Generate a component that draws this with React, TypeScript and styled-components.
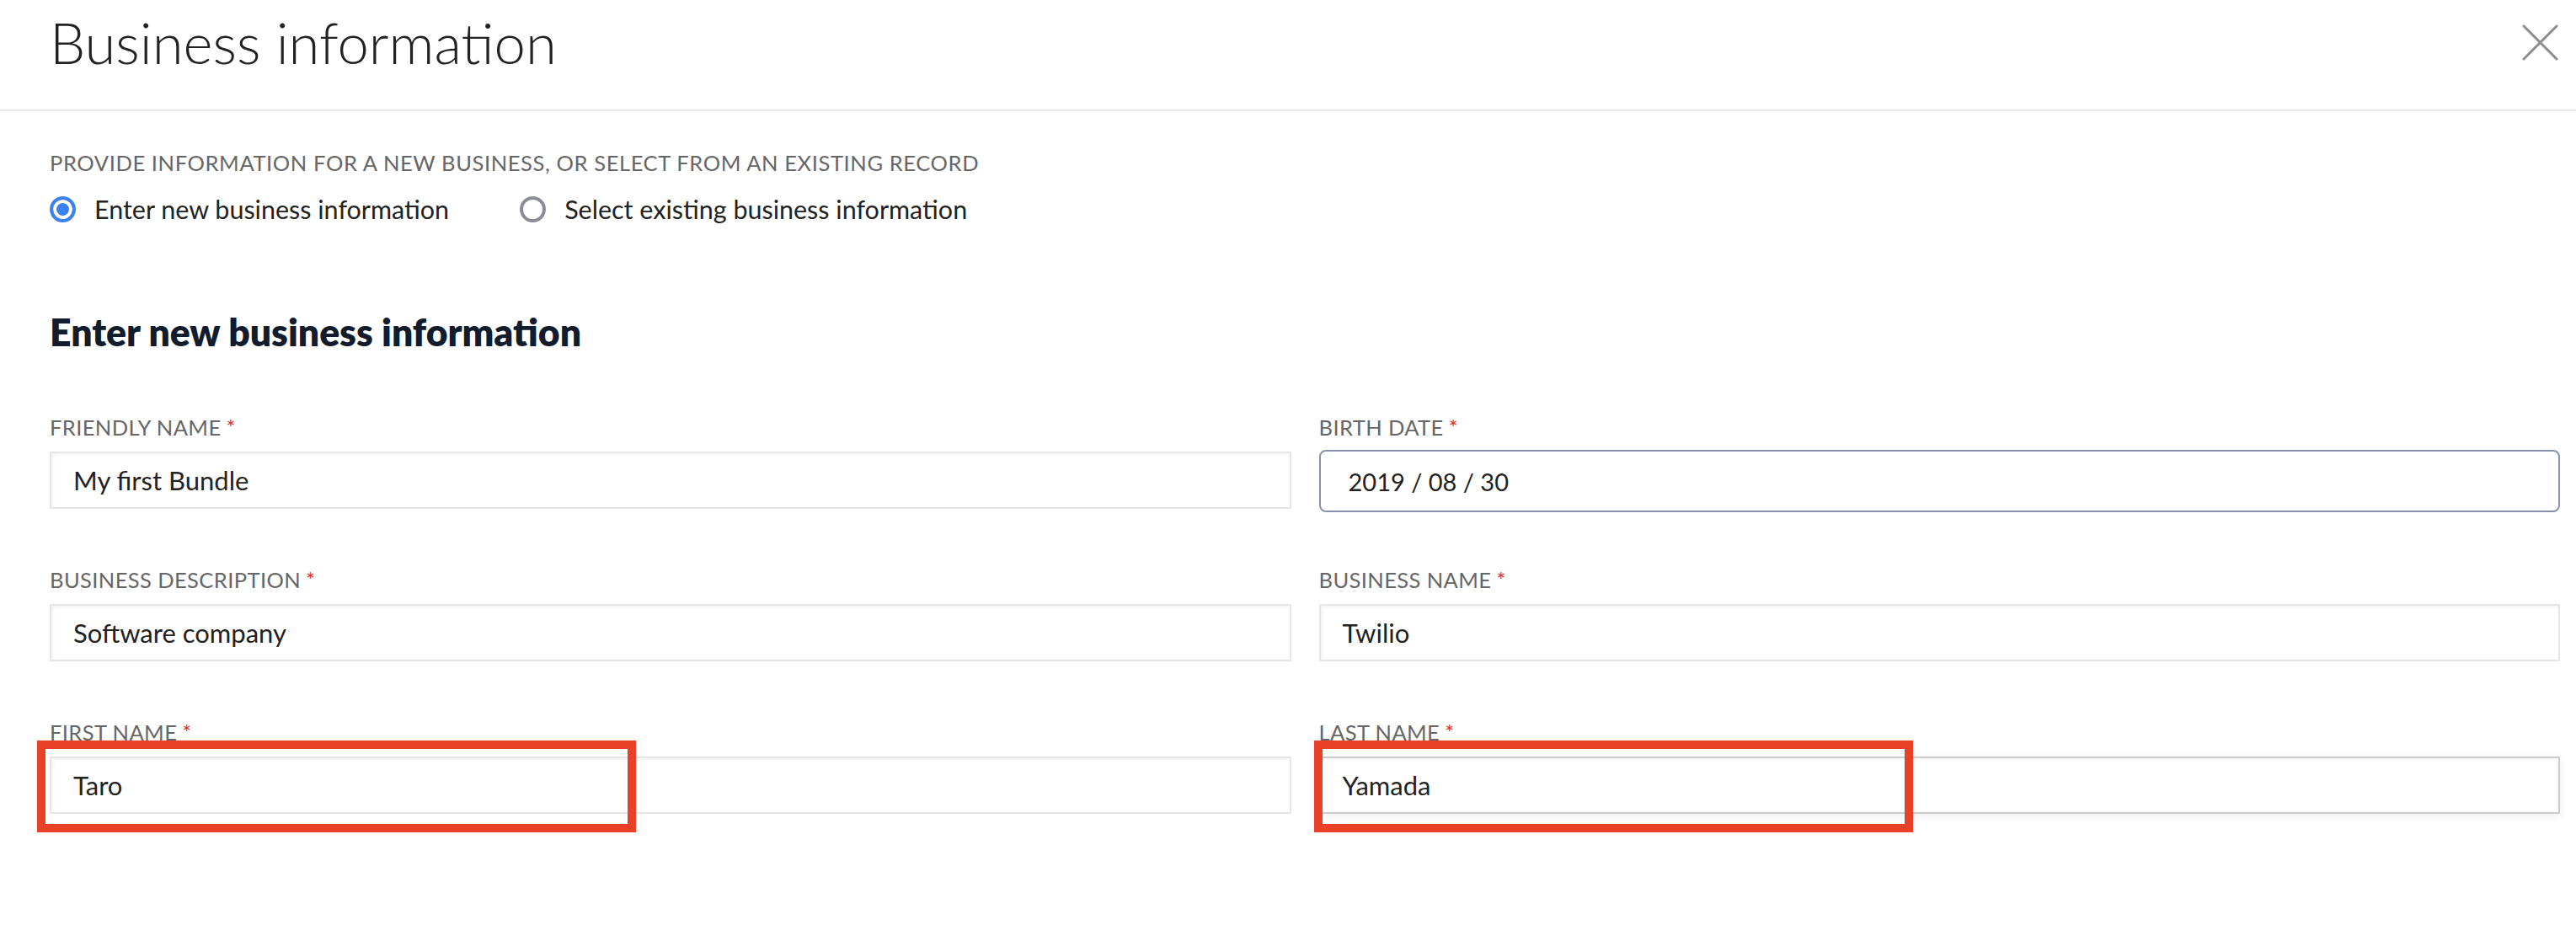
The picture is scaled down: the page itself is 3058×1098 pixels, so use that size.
import React from "react";
import styled, { createGlobalStyle } from "styled-components";

const Global = createGlobalStyle`
  html, body { margin: 0; padding: 0; background: #ffffff; }
  body { font-family: Lato, "Open Sans", sans-serif; color: #222222; }
  * { box-sizing: border-box; }
`;

const Page = styled.div`
  width: 3058px;
  height: 1098px;
  background: #ffffff;
  overflow: hidden;
`;

const Header = styled.header`
  height: 132px;
  display: flex;
  align-items: flex-start;
  justify-content: space-between;
  padding: 13px 21px 0 59px;
  border-bottom: 2px solid #e8e8e8;
`;

const Title = styled.h1`
  margin: 0;
  font-family: Lato, sans-serif;
  font-weight: 300;
  font-size: 67px;
  line-height: 74px;
  color: #222222;
`;

const CloseButton = styled.button`
  margin-top: 16px;
  width: 43px;
  height: 43px;
  padding: 0;
  border: none;
  background: transparent;
  display: flex;
  align-items: center;
  justify-content: center;
`;

const Body = styled.main`
  padding: 46px 19px 0 59px;
`;

const Overline = styled.div`
  font-size: 25.5px;
  line-height: 30px;
  letter-spacing: 0.6px;
  color: #666666;
  text-transform: uppercase;
`;

const RadioRow = styled.div`
  margin-top: 20px;
  display: flex;
  align-items: center;
  gap: 84px;
  height: 40px;
`;

const RadioOption = styled.label`
  display: flex;
  align-items: center;
  gap: 22px;
  font-size: 30.5px;
  line-height: 40px;
  color: #222222;
`;

const RadioDot = styled.span<{ $checked?: boolean }>`
  width: 31px;
  height: 31px;
  border-radius: 50%;
  border: 4px solid ${(p) => (p.$checked ? "#3b82f0" : "#8d8d99")};
  background: ${(p) => (p.$checked ? "#3b82f0" : "#ffffff")};
  box-shadow: ${(p) => (p.$checked ? "inset 0 0 0 4px #ffffff" : "none")};
  flex: none;
`;

const SectionTitle = styled.h2`
  margin: 101px 0 0;
  font-size: 44.5px;
  line-height: 50px;
  font-weight: 800;
  color: #121c2d;
`;

const FieldGrid = styled.div`
  margin-top: 73px;
  display: grid;
  grid-template-columns: 1fr 1fr;
  column-gap: 33px;
  row-gap: 69px;
`;

const Field = styled.div`
  position: relative;
  display: flex;
  flex-direction: column;
`;

const Label = styled.div`
  font-size: 25.5px;
  line-height: 30px;
  letter-spacing: 0.4px;
  color: #666666;
  text-transform: uppercase;
  margin-bottom: 14px;
`;

const Required = styled.span`
  color: #e0301e;
  margin-left: 6px;
`;

const Input = styled.div<{ $variant?: "default" | "date" | "hover" }>`
  height: ${(p) => (p.$variant === "date" ? "74px" : "68px")};
  margin: ${(p) => (p.$variant === "date" ? "-2px 0 -4px" : "0")};
  display: flex;
  align-items: center;
  padding-left: ${(p) => (p.$variant === "date" ? "33px" : "26px")};
  font-size: ${(p) => (p.$variant === "date" ? "29px" : "31px")};
  color: #222222;
  background: #ffffff;
  border: 2px solid
    ${(p) =>
      p.$variant === "date" ? "#8891aa" : p.$variant === "hover" ? "#cccccc" : "#e6e6e6"};
  border-radius: ${(p) => (p.$variant === "date" ? "8px" : "0")};
  box-shadow: ${(p) =>
    p.$variant === "date"
      ? "none"
      : p.$variant === "hover"
      ? "0 2px 10px rgba(0,0,0,0.08), inset 0 2px 4px rgba(0,0,0,0.04)"
      : "inset 2px 2px 4px rgba(0,0,0,0.05)"};
`;

const Highlight = styled.div<{ $offset: number }>`
  position: absolute;
  left: ${(p) => p.$offset}px;
  top: 25px;
  width: 711px;
  height: 109px;
  border: 10px solid #e94128;
  pointer-events: none;
`;

type FieldDef = {
  label: string;
  value: string;
  variant?: "default" | "date" | "hover";
  highlight?: number;
};

const fields: FieldDef[] = [
  { label: "Friendly name", value: "My first Bundle" },
  { label: "Birth date", value: "2019 / 08 / 30", variant: "date" },
  { label: "Business description", value: "Software company" },
  { label: "Business name", value: "Twilio" },
  { label: "First name", value: "Taro", highlight: -15 },
  { label: "Last name", value: "Yamada", variant: "hover", highlight: -6 },
];

const CloseIcon = () => (
  <svg width="43" height="43" viewBox="0 0 43 43">
    <path d="M2 2 L41 41 M41 2 L2 41" stroke="#8c8c8c" strokeWidth="3" strokeLinecap="round" />
  </svg>
);

export default function App() {
  return (
    <Page>
      <Global />
      <Header>
        <Title>Business information</Title>
        <CloseButton aria-label="Close">
          <CloseIcon />
        </CloseButton>
      </Header>
      <Body>
        <Overline>Provide information for a new business, or select from an existing record</Overline>
        <RadioRow>
          <RadioOption>
            <RadioDot $checked />
            Enter new business information
          </RadioOption>
          <RadioOption>
            <RadioDot />
            Select existing business information
          </RadioOption>
        </RadioRow>
        <SectionTitle>Enter new business information</SectionTitle>
        <FieldGrid>
          {fields.map((f) => (
            <Field key={f.label}>
              <Label>
                {f.label}
                <Required>*</Required>
              </Label>
              <Input $variant={f.variant}>{f.value}</Input>
              {f.highlight !== undefined ? <Highlight $offset={f.highlight} /> : null}
            </Field>
          ))}
        </FieldGrid>
      </Body>
    </Page>
  );
}
